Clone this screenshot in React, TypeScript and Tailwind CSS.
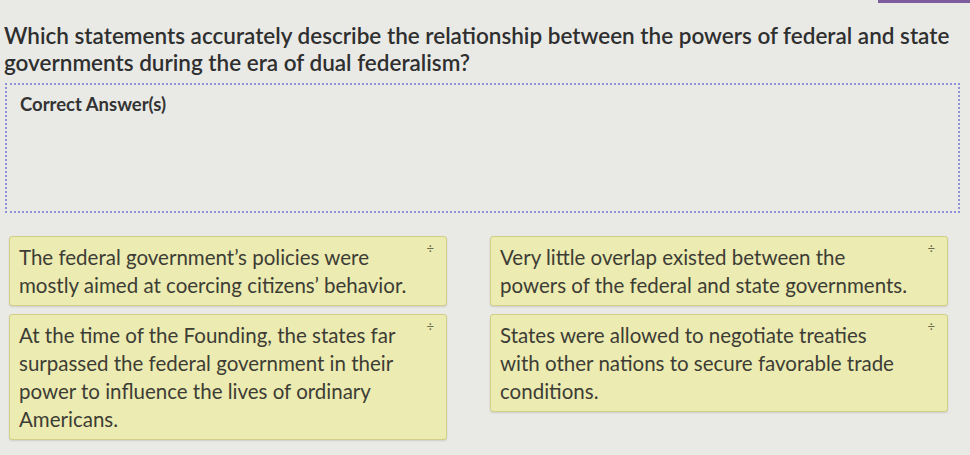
const cardsLeft = [
  { text: "The federal government\u2019s policies were mostly aimed at coercing citizens\u2019 behavior.", pr: "pr-[20px]" },
  {
    text: "At the time of the Founding, the states far surpassed the federal government in their power to influence the lives of ordinary Americans.",
    pr: "pr-[20px]",
  },
];

const cardsRight = [
  { text: "Very little overlap existed between the powers of the federal and state governments.", pr: "pr-[36px]" },
  { text: "States were allowed to negotiate treaties with other nations to secure favorable trade conditions.", pr: "pr-[42px]" },
];

function AnswerCard({ text, pr }: { text: string; pr: string }) {
  return (
    <div
      className={
        "relative rounded-[3px] border border-[#d3cf86] bg-[#ecebb1] py-[6px] pl-[9px] text-[20.5px] leading-[28px] text-[#3d3d35] shadow-[0_1px_2px_rgba(0,0,0,0.12)] " +
        pr
      }
    >
      {text}
      {/* drag handle */}
      <span className="absolute right-[12px] top-[5px] text-[13px] leading-none text-[#6b6a4a]">÷</span>
    </div>
  );
}

export default function App() {
  return (
    <div className="h-[455px] w-[970px] overflow-hidden bg-[#e9eae6] font-['Lato',sans-serif]">
      <div className="flex justify-end">
        <div className="h-[3px] w-[92px] bg-[#7d5d9c]" />
      </div>

      <h1 className="mt-[19px] pl-[4px] pr-[20px] text-[22.5px] font-semibold leading-[27px] text-[#2f2f2f]">
        Which statements accurately describe the relationship between the powers of federal and state governments during the era of dual federalism?
      </h1>

      <div className="ml-[5px] mr-[10px] mt-[7px] h-[130px] border-2 border-dotted border-[#8d93d6] px-[13px] pt-[6px]">
        <div className="text-[18.5px] font-bold text-[#333]">Correct Answer(s)</div>
      </div>

      <div className="mt-[23px] grid grid-cols-[438px_458px] items-start gap-x-[43px] pl-[9px]">
        <div className="flex flex-col gap-[8px]">
          {cardsLeft.map((c) => (
            <AnswerCard key={c.text} text={c.text} pr={c.pr} />
          ))}
        </div>
        <div className="flex flex-col gap-[8px]">
          {cardsRight.map((c) => (
            <AnswerCard key={c.text} text={c.text} pr={c.pr} />
          ))}
        </div>
      </div>
    </div>
  );
}
